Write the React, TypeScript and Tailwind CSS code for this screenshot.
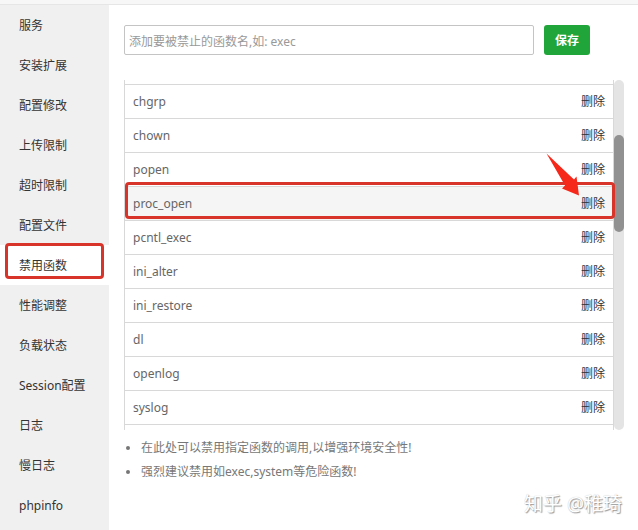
import { useState } from 'react';

const MENU = [
  '服务',
  '安装扩展',
  '配置修改',
  '上传限制',
  '超时限制',
  '配置文件',
  '禁用函数',
  '性能调整',
  '负载状态',
  'Session配置',
  '日志',
  '慢日志',
  'phpinfo',
];

const FUNCTIONS = [
  'chgrp',
  'chown',
  'popen',
  'proc_open',
  'pcntl_exec',
  'ini_alter',
  'ini_restore',
  'dl',
  'openlog',
  'syslog',
];

const ACTIVE = '禁用函数';
const HOVERED = 'proc_open';

function Sidebar() {
  return (
    <nav className="w-[109px] shrink-0 bg-[#f0f0f0]">
      {MENU.map((item) => (
        <button
          key={item}
          type="button"
          className={`relative block h-10 w-full pt-0.5 pl-[19px] text-left text-[#333] ${
            item === ACTIVE ? 'bg-white' : ''
          }`}
        >
          {item}
          {item === ACTIVE && (
            <span className="absolute -top-0.5 left-[5px] h-9 w-[99px] rounded-[4px] border-3 border-[#d9342a]" />
          )}
        </button>
      ))}
    </nav>
  );
}

function Arrow() {
  return (
    <svg
      viewBox="0 0 34 44"
      width={34}
      height={44}
      className="absolute top-[73px] right-[44px]"
      aria-hidden="true"
    >
      <path d="M0.5 0.5 L28 26.5 L30.5 23.5 L33 42.5 L16 35.5 L19 32.5 Z" fill="#f5281a" />
    </svg>
  );
}

function FunctionList() {
  return (
    <div className="relative mt-[25px] flex">
      <div className="h-[350px] flex-1 overflow-hidden">
        <table className="w-full border-collapse border-x border-[#d8d8d8]">
          <tbody>
            {/* tail of the row scrolled out above */}
            <tr className="h-1 border-b border-[#d8d8d8]">
              <td colSpan={2} className="p-0" />
            </tr>
            {FUNCTIONS.map((name) => (
              <tr
                key={name}
                className={`h-[34px] border-b border-[#d8d8d8] ${
                  name === HOVERED ? 'bg-[#f5f5f5]' : ''
                }`}
              >
                <td className="p-0 pt-0.5 pl-2 text-[#666]">{name}</td>
                <td className="p-0 pt-0.5 pr-2 text-right">
                  <a href="#" className="text-[#333]">
                    删除
                  </a>
                </td>
              </tr>
            ))}
            <tr className="h-[34px]">
              <td colSpan={2} className="p-0" />
            </tr>
          </tbody>
        </table>
      </div>
      <div className="w-2.5 rounded-full bg-[#e4e4e4] pt-[55px]">
        <div className="h-[97px] rounded-full bg-[#919191]" />
      </div>
      <div className="absolute top-[102px] right-[9px] left-px h-[37px] rounded-[4px] border-3 border-[#d9342a]" />
      <Arrow />
    </div>
  );
}

export default function App() {
  const [value, setValue] = useState('');

  return (
    <div className="relative flex min-h-screen flex-col bg-white font-['Noto_Sans','Noto_Sans_CJK_SC',sans-serif] text-[12px]">
      <div className="h-[5px] border-b border-[#e6e6e6] bg-[#f7f7f7]" />
      <div className="flex flex-1">
        <Sidebar />
        <main className="flex-1 pt-5 pr-3.5 pl-[15px]">
          <form className="flex gap-2.5 pr-[34px]" onSubmit={(e) => e.preventDefault()}>
            <input
              type="text"
              aria-label="函数名"
              placeholder="添加要被禁止的函数名,如: exec"
              value={value}
              onChange={(e) => setValue(e.target.value)}
              className="h-[30px] min-w-0 flex-1 rounded-xs border border-[#c4c4c4] px-1 pt-0.5 text-[#555] placeholder:text-[#999]"
            />
            <button
              type="submit"
              className="h-[30px] w-[46px] rounded-[3px] bg-[#20a53a] pt-0.5 font-bold text-white"
            >
              保存
            </button>
          </form>
          <FunctionList />
          <ul className="mt-1.5 list-disc pl-[17px] leading-6 text-[#777]">
            <li>在此处可以禁用指定函数的调用,以增强环境安全性!</li>
            <li>强烈建议禁用如exec,system等危险函数!</li>
          </ul>
        </main>
      </div>
      <div className="absolute right-4 bottom-3 text-[19px] leading-7 text-white [text-shadow:1px_1px_1px_#999,0_0_1px_#bbb]">
        知乎 @稚琦
      </div>
    </div>
  );
}
